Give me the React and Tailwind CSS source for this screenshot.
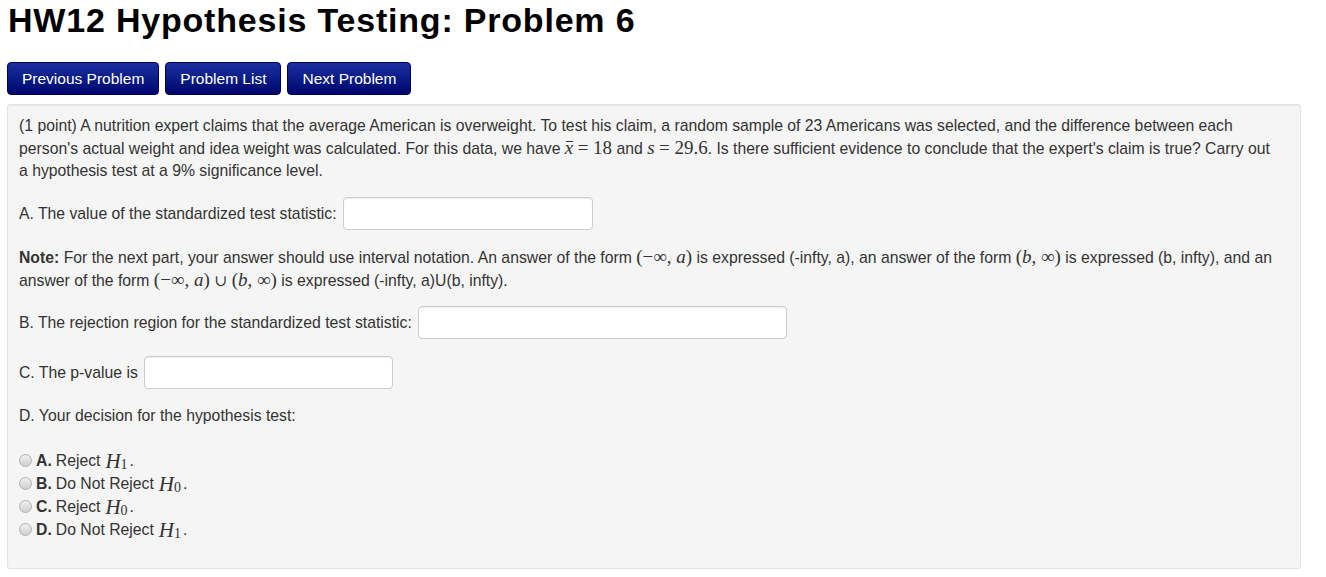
const serif = { fontFamily: '"Liberation Serif", "DejaVu Serif", serif' };

function M({ children, italic = true }) {
  return (
    <span className={`text-[19px] leading-[22px] ${italic ? 'italic' : ''}`} style={serif}>
      {children}
    </span>
  );
}

function XBar() {
  return (
    <span className="relative inline-block italic">
      x
      <span className="absolute left-[1px] right-0 top-[4px] h-px bg-current" />
    </span>
  );
}

function Input({ width }) {
  return (
    <input
      type="text"
      className={`h-[33px] ${width} rounded border border-[#cccccc] bg-white px-2 shadow-[inset_0_1px_1px_rgba(0,0,0,0.075)] outline-none`}
    />
  );
}

function Radio({ letter, text, sub }) {
  return (
    <label className="flex h-[23px] items-center">
      <span className="mr-[4px] inline-block h-[13px] w-[13px] rounded-full border border-[#b0b0b0] bg-gradient-to-b from-[#f0f0f0] to-[#cfcfcf]" />
      <span className="font-bold">{letter}.</span>
      <span className="ml-1">{text}</span>
      <span className="ml-[5px] text-[21px] italic leading-[22px]" style={serif}>H</span>
      <span className="relative top-[4px] text-[14px] leading-[14px]" style={serif}>{sub}</span>
      <span className="ml-[2px]">.</span>
    </label>
  );
}

export default function App() {
  return (
    <div className="min-h-screen bg-white text-[#333333]" style={{ fontFamily: '"Liberation Sans", Arial, sans-serif' }}>
      <h1 className="pl-[8px] pt-[1px] text-[34px] font-bold leading-[38px] tracking-[0.8px] text-black">
        HW12 Hypothesis Testing: Problem 6
      </h1>

      <div className="mt-[23px] flex gap-[6px] pl-[7px]">
        {['Previous Problem', 'Problem List', 'Next Problem'].map((label) => (
          <button
            key={label}
            className="h-[33px] rounded-[4px] border border-[#000055] bg-gradient-to-b from-[#1c2fa0] to-[#00046e] px-[14px] text-[15.5px] text-white"
          >
            {label}
          </button>
        ))}
      </div>

      <div className="ml-[7px] mt-[9px] w-[1294px] rounded-[3px] border border-[#e3e3e3] bg-[#f5f5f5] px-[11px] pb-[27px] pt-[10px] text-[15.75px] leading-[22px] shadow-[inset_0_1px_1px_rgba(0,0,0,0.05)]">
        <p className="whitespace-nowrap">
          (1 point) A nutrition expert claims that the average American is overweight. To test his claim, a random sample of 23 Americans was selected, and the difference between each
          <br />
          person's actual weight and idea weight was calculated. For this data, we have <M><XBar /></M> <M italic={false}>=&nbsp;18</M> and{' '}
          <M>s</M> <M italic={false}>=&nbsp;29.6</M>. Is there sufficient evidence to conclude that the expert's claim is true? Carry out
          <br />
          a hypothesis test at a 9% significance level.
        </p>

        <div className="mt-[15px] flex items-center gap-[6px]">
          <span>A. The value of the standardized test statistic:</span>
          <Input width="w-[250px]" />
        </div>

        <p className="mt-[16px] whitespace-nowrap">
          <span className="font-bold">Note:</span> For the next part, your answer should use interval notation. An answer of the form{' '}
          <M italic={false}>(−∞, <i>a</i>)</M> is expressed (-infty, a), an answer of the form <M italic={false}>(<i>b</i>, ∞)</M> is expressed (b, infty), and an
          <br />
          answer of the form <M italic={false}>(−∞, <i>a</i>)</M> <span style={serif}>∪</span> <M italic={false}>(<i>b</i>, ∞)</M> is expressed (-infty, a)U(b, infty).
        </p>

        <div className="mt-[14px] flex items-center gap-[6px]">
          <span>B. The rejection region for the standardized test statistic:</span>
          <Input width="w-[369px]" />
        </div>

        <div className="mt-[17px] flex items-center gap-[6px]">
          <span>C. The p-value is</span>
          <Input width="w-[249px]" />
        </div>

        <p className="mt-[16px]">D. Your decision for the hypothesis test:</p>

        <div className="mt-[22px] flex flex-col">
          <Radio letter="A" text="Reject" sub="1" />
          <Radio letter="B" text="Do Not Reject" sub="0" />
          <Radio letter="C" text="Reject" sub="0" />
          <Radio letter="D" text="Do Not Reject" sub="1" />
        </div>
      </div>
    </div>
  );
}
